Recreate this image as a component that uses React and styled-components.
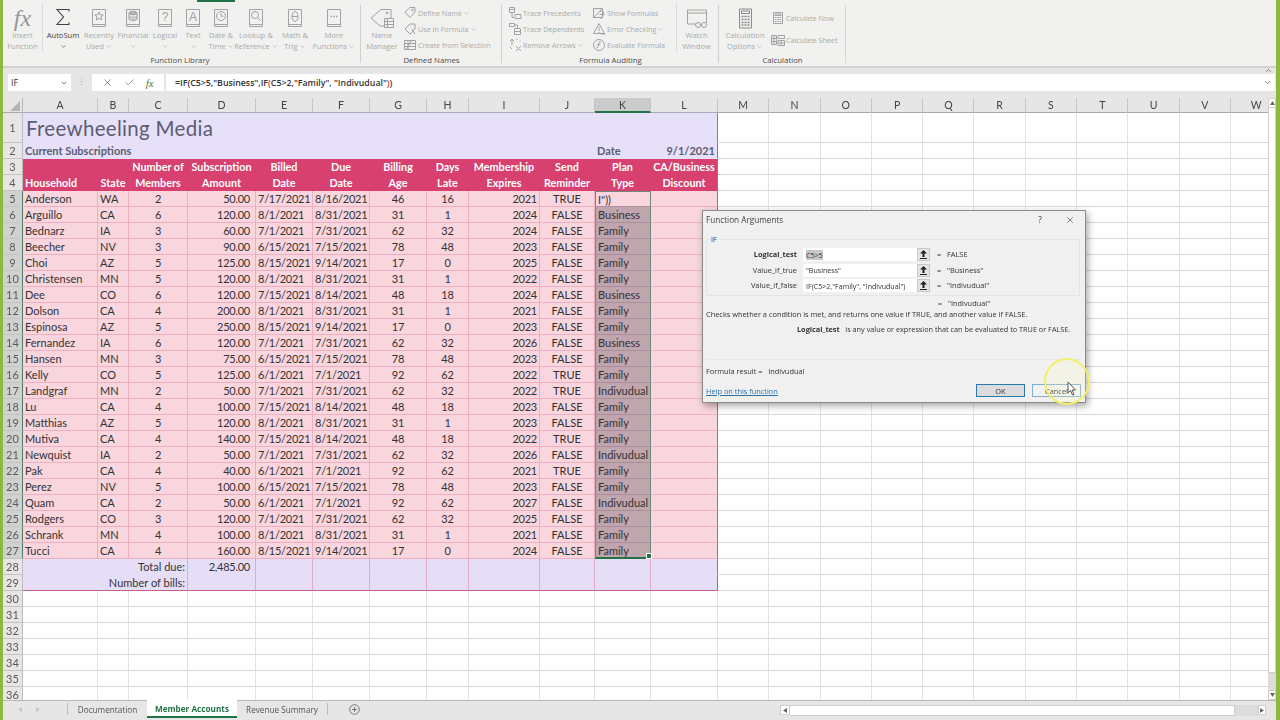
import React from "react";
import styled, { createGlobalStyle } from "styled-components";
import { ChevronDown, ChevronUp, X, Check } from "lucide-react";

const GlobalStyle = createGlobalStyle`
  html, body { margin: 0; padding: 0; background: #fff; overflow: hidden; }
  body { font-family: "Lato", "Liberation Sans", sans-serif; }
`;

const GRID_COLS =
  "20px 75px 31px 59px 68px 57px 57px 57px 42px 71px 55px 56px 67px repeat(11, 51.3px)";

const Window = styled.div`
  position: relative;
  width: 1280px;
  height: 720px;
  display: flex;
  flex-direction: column;
  box-sizing: border-box;
  border-left: 3px solid #8fb93c;
  border-right: 4px solid #8fb93c;
  overflow: hidden;
  filter: blur(0.3px);
`;

/* ribbon */
const Ribbon = styled.div`
  position: relative;
  height: 66px;
  display: flex;
  background: #f1f1ef;
  border-bottom: 2px solid #d2d2d2;
  font-family: "Open Sans", sans-serif;
`;

const ActiveTabMark = styled.div`
  position: absolute;
  left: 194px;
  top: 0;
  width: 38px;
  height: 2px;
  background: #217346;
`;

const Group = styled.div`
  width: ${(p) => p.$w}px;
  box-sizing: border-box;
  padding-right: ${(p) => p.$trim || 0}px;
  display: flex;
  flex-direction: column;
  position: relative;
  &::after {
    content: "";
    position: absolute;
    right: 0;
    top: 5px;
    bottom: 3px;
    width: 1px;
    background: ${(p) => (p.$last ? "#d6d6d6" : "#cfcfcf")};
  }
`;

const GroupBody = styled.div`
  height: 55px;
  padding-top: 3px;
  box-sizing: border-box;
  display: flex;
`;

const GroupLabel = styled.div`
  text-align: center;
  font-size: 7.8px;
  line-height: 11px;
  color: #4c4c4c;
`;

const BigButton = styled.div`
  width: ${(p) => p.$w}px;
  flex: none;
  box-sizing: border-box;
  display: flex;
  flex-direction: column;
  align-items: center;
  color: ${(p) => (p.$dark ? "#444" : "#aaa")};
  font-size: 7.6px;
  line-height: 11px;
  white-space: nowrap;
  ${(p) => p.$rule === "right" && "border-right: 1px solid #dcdcdc; margin-bottom: 3px;"}
  ${(p) => p.$rule === "left" && "border-left: 1px solid #dcdcdc; margin-bottom: 3px;"}
`;

const BigIcon = styled.div`
  height: 27px;
  box-sizing: border-box;
  padding-top: 5px;
  display: flex;
  align-items: flex-start;
  justify-content: center;
`;

const Line = styled.div`
  height: 11px;
  display: flex;
  align-items: center;
  gap: 1px;
`;

const SmallColumn = styled.div`
  width: ${(p) => p.$w}px;
  flex: none;
  box-sizing: border-box;
  display: flex;
  flex-direction: column;
  padding-top: ${(p) => p.$top || 2}px;
  padding-left: ${(p) => p.$left || 0}px;
  gap: ${(p) => p.$gap || 0}px;
`;

const SmallItem = styled.div`
  height: 16px;
  display: flex;
  align-items: center;
  gap: 1px;
  color: #aaa;
  font-size: 7.2px;
  white-space: nowrap;
  svg:first-child { flex: none; }
`;

const IconSvg = styled.svg`
  fill: none;
  stroke: ${(p) => p.$color || "#a2a2a2"};
  stroke-width: 1;
  display: block;
`;

const FxGlyph = styled.span`
  font-family: "Liberation Serif", serif;
  font-style: italic;
  font-size: 24px;
  line-height: 20px;
  color: #969696;
`;

const Caret = () => <ChevronDown size={7} color="#a8a8a8" strokeWidth={2} />;

const Book = ({ children }) => (
  <IconSvg width="16" height="21" viewBox="0 0 16 21">
    <path d="M1.5 1.5h13v15h-13zM1.5 16.5v2h13v-2" />
    {children}
  </IconSvg>
);

const Glyph = styled.text`
  font-family: "Liberation Sans", sans-serif;
  font-size: 12px;
  fill: #a2a2a2;
  stroke: none;
  text-anchor: middle;
`;

const SIGMA = (
  <IconSvg width="16" height="18" viewBox="0 0 16 18" $color="#444">
    <path d="M14 3.5V1.5H2l6.5 7.5L2 16.5h12v-2" strokeWidth="1.1" />
  </IconSvg>
);

const small = (inner) => (
  <IconSvg width="14" height="14" viewBox="0 0 14 14">
    {inner}
  </IconSvg>
);

const ICONS = {
  star: <Book><path d="M8 4l1.2 2.8 3 .2-2.3 2 .8 3L8 10.400l-2.700 1.600.8-3-2.300-2 3-.2z" /></Book>,
  coins: (
    <Book>
      <ellipse cx="8" cy="5" rx="4" ry="1.800" fill="#b5b5b5" />
      <path d="M4 5v6c0 2.400 8 2.400 8 0V5M4 7.500c0 2.400 8 2.400 8 0M4 9.500c0 2.400 8 2.400 8 0" />
    </Book>
  ),
  question: <Book><Glyph x="8" y="13">?</Glyph></Book>,
  letter: <Book><Glyph x="8" y="13">A</Glyph></Book>,
  clock: <Book><circle cx="8" cy="8" r="4.500" /><path d="M8 5v3.200h2.500" /></Book>,
  lens: <Book><circle cx="7" cy="7" r="3.500" /><path d="M9.500 9.500l3 3" /></Book>,
  theta: <Book><ellipse cx="8" cy="8.500" rx="3" ry="5" /><path d="M5 8.500h6" /></Book>,
  dots: <Book><path d="M4.500 8.500h1.500M7.300 8.500h1.500M10 8.500h1.500" strokeWidth="1.400" /></Book>,
  tag: (
    <IconSvg width="26" height="22" viewBox="0 0 26 22">
      <path d="M2 10L12 1.500h10v9" />
      <path d="M2 10l9 8h4" />
      <circle cx="18" cy="5" r="1" />
      <path d="M15.500 10.500h9v9h-9zM15.500 13.500h9M15.500 16.500h9M18.500 10.500v9" />
    </IconSvg>
  ),
  define: small(<><path d="M2 6l5-4.500h5v4.500l-5 5.500z" /><circle cx="9.500" cy="4" r=".8" /></>),
  use: small(<><path d="M2 7l5-5h5v5l-5 5z" /><path d="M9 7l3 5" /></>),
  create: small(<path d="M1.500 2.500h11v9h-11zM1.500 5.500h11M1.500 8.500h11M5 2.500v9M8.500 2.500l-5 9" />),
  precedents: small(<path d="M1.500 1.500h5v5h-5zM1.500 3.500h5M4 6.500v5h2M7 8.500h6v4h-6z" />),
  dependents: small(<path d="M1.500 1.500h5v3h-5zM6.500 3h3v3M6.500 6.500h6v6h-6zM6.500 9.500h6" />),
  arrows: small(<path d="M4 1v6M2 3l2-2 2 2M2 9l2 2M9 1v1M11.500 3h1M8 8l5 5M13 8l-5 5" />),
  show: small(<path d="M1.500 2.500h9v9h-9zM2 11.500l8-9M8 6c3-3 4 0 3 3s-1 4-3 3M7.500 8.500h5" />),
  error: small(<path d="M7 1.500l5.500 10h-11zM7 5v4M7 10v1M9 12h4" />),
  evaluate: small(<><circle cx="7" cy="7" r="5.500" /><path d="M9 4c-2-1-2 1-2.500 3S6 10 4.500 9.500M5 6.500h3.500" /></>),
  glasses: (
    <IconSvg width="22" height="22" viewBox="0 0 22 22">
      <path d="M1.500 2h19v13M1.500 2v14h8M1.500 5h19" />
      <circle cx="12" cy="17" r="2.500" />
      <circle cx="18" cy="17" r="2.500" />
      <path d="M14.500 17h1M9.500 16l1-1" />
    </IconSvg>
  ),
  calc: (
    <IconSvg width="15" height="21" viewBox="0 0 15 21" $color="#8a8a8a">
      <path d="M1.500 1h12v19h-12zM3.500 3h8v2.500h-8z" />
      <path d="M3.500 8.500h2M6.500 8.500h2M9.500 8.500h2M3.500 11.500h2M6.500 11.500h2M9.500 11.500h2M3.500 14.500h2M6.500 14.500h2M9.500 14.500h2M3.500 17h2M6.500 17h2M9.500 17h2" strokeWidth="1.500" />
    </IconSvg>
  ),
  calcSmall: small(<path d="M2.500 1.500h9v11h-9zM4 3h6v1.500H4zM4 6.500h1.500M6.300 6.500h1.500M8.500 6.500h1.500M4 8.500h1.500M6.300 8.500h1.500M8.500 8.500h1.500M4 10.500h1.500M6.300 10.500h1.500M8.500 10.500h1.500" />),
  calcSheet: small(<path d="M.5 2.500h5v9h-5zM.5 5.500h5M.5 8.500h5M3 2.500v9M7 2.500h6.500v3H7zM7 7.500h6.500v5H7zM10.200 7.500v5M7 10h6.500" />),
};

const BIG_FUNCTIONS = [
  { w: 40, icon: SIGMA, lines: ["AutoSum", ""], dark: true },
  { w: 32, icon: ICONS.star, lines: ["Recently", "Used"] },
  { w: 36, icon: ICONS.coins, lines: ["Financial", ""] },
  { w: 28, icon: ICONS.question, lines: ["Logical", ""] },
  { w: 28, icon: ICONS.letter, lines: ["Text", ""] },
  { w: 28, icon: ICONS.clock, lines: ["Date &", "Time"] },
  { w: 42, icon: ICONS.lens, lines: ["Lookup &", "Reference"] },
  { w: 36, icon: ICONS.theta, lines: ["Math &", "Trig"] },
  { w: 42, icon: ICONS.dots, lines: ["More", "Functions"] },
];

const BigBtn = ({ w, icon, lines, dark, rule, noCaret }) => (
  <BigButton $w={w} $dark={dark} $rule={rule}>
    <BigIcon>{icon}</BigIcon>
    <Line>{lines[0]}</Line>
    <Line>
      {lines[1]}
      {!noCaret && <ChevronDown size={7} color={dark ? "#444" : "#a8a8a8"} strokeWidth={2} />}
    </Line>
  </BigButton>
);

const Small = ({ icon, caret, children }) => (
  <SmallItem>
    {ICONS[icon]}
    {children}
    {caret && <Caret />}
  </SmallItem>
);

const CollapseMark = styled.div`
  position: absolute;
  right: 3px;
  top: 58px;
`;

const RibbonBar = () => (
  <Ribbon>
    <ActiveTabMark />
    <Group $w={358} $trim={4}>
      <GroupBody>
        <BigBtn
          w={40}
          icon={<FxGlyph>fx</FxGlyph>}
          lines={["Insert", "Function"]}
          rule="right"
          noCaret
        />
        {BIG_FUNCTIONS.map((b) => (
          <BigBtn key={b.lines[0]} {...b} />
        ))}
      </GroupBody>
      <GroupLabel>Function Library</GroupLabel>
    </Group>
    <Group $w={141}>
      <GroupBody>
        <BigBtn w={42} icon={ICONS.tag} lines={["Name", "Manager"]} noCaret />
        <SmallColumn $w={98}>
          <Small icon="define" caret>Define Name</Small>
          <Small icon="use" caret>Use in Formula</Small>
          <Small icon="create">Create from Selection</Small>
        </SmallColumn>
      </GroupBody>
      <GroupLabel>Defined Names</GroupLabel>
    </Group>
    <Group $w={217}>
      <GroupBody>
        <SmallColumn $w={90} $left={6}>
          <Small icon="precedents">Trace Precedents</Small>
          <Small icon="dependents">Trace Dependents</Small>
          <Small icon="arrows" caret>Remove Arrows</Small>
        </SmallColumn>
        <SmallColumn $w={84}>
          <Small icon="show">Show Formulas</Small>
          <Small icon="error" caret>Error Checking</Small>
          <Small icon="evaluate">Evaluate Formula</Small>
        </SmallColumn>
        <BigBtn w={40} icon={ICONS.glasses} lines={["Watch", "Window"]} rule="left" noCaret />
      </GroupBody>
      <GroupLabel>Formula Auditing</GroupLabel>
    </Group>
    <Group $w={127} $last>
      <GroupBody>
        <BigBtn w={52} icon={ICONS.calc} lines={["Calculation", "Options"]} />
        <SmallColumn $w={74} $top={7} $gap={6}>
          <Small icon="calcSmall">Calculate Now</Small>
          <Small icon="calcSheet">Calculate Sheet</Small>
        </SmallColumn>
      </GroupBody>
      <GroupLabel>Calculation</GroupLabel>
    </Group>
    <CollapseMark>
      <ChevronUp size={9} color="#666" />
    </CollapseMark>
  </Ribbon>
);

/* formula bar */
const FormulaStrip = styled.div`
  height: 30px;
  box-sizing: border-box;
  padding: 6px 1px 7px 5px;
  background: #e6e6e6;
  display: flex;
  align-items: stretch;
  font-family: "Open Sans", sans-serif;
`;

const NameBox = styled.div`
  width: 63px;
  background: #fff;
  display: flex;
  align-items: center;
  justify-content: space-between;
  padding: 0 3px;
  box-sizing: border-box;
  font-size: 9px;
  color: #333;
`;

const Grip = styled.div`
  width: 21px;
  text-align: center;
  color: #aaa;
  font-size: 9px;
  line-height: 15px;
`;

const FxButtons = styled.div`
  width: 72px;
  background: #fff;
  display: flex;
  align-items: center;
  justify-content: space-around;
  padding: 0 5px;
  box-sizing: border-box;
  margin-right: 2px;
`;

const FxSmall = styled.span`
  font-family: "Liberation Serif", serif;
  font-style: italic;
  font-size: 11px;
  color: #4e7a4e;
`;

const FormulaInput = styled.div`
  flex: 1;
  background: #fff;
  padding-left: 9px;
  display: flex;
  align-items: center;
  justify-content: space-between;
  padding-right: 3px;
  font-size: 8.8px;
  font-weight: 600;
  color: #333;
  white-space: pre;
`;

const Paren = styled.span`
  color: #d0352f;
`;

const FormulaBar = () => (
  <FormulaStrip>
    <NameBox>
      IF
      <ChevronDown size={8} color="#666" strokeWidth={2.500} />
    </NameBox>
    <Grip>⋮</Grip>
    <FxButtons>
      <X size={11} color="#666" strokeWidth={1.500} />
      <Check size={11} color="#666" strokeWidth={1.500} />
      <FxSmall>fx</FxSmall>
    </FxButtons>
    <FormulaInput>
      <span>
        =IF(C5&gt;5,"Business",IF<Paren>(</Paren>C5&gt;2,"Family", "Indivudual"<Paren>)</Paren>)
      </span>
      <ChevronDown size={9} color="#555" />
    </FormulaInput>
  </FormulaStrip>
);

/* sheet */
const SheetArea = styled.div`
  flex: 1;
  min-height: 0;
  display: flex;
  overflow: hidden;
`;

const Grid = styled.div`
  width: 1265px;
  flex: none;
  overflow: hidden;
  font-family: "Lato", sans-serif;
`;

const Row = styled.div`
  height: ${(p) => p.$h || 16}px;
  display: grid;
  grid-template-columns: ${GRID_COLS};
`;

const ColHead = styled.div`
  display: flex;
  align-items: center;
  justify-content: center;
  background: ${(p) => (p.$on ? "#c9cccb" : "#e6e6e6")};
  border-right: 1px solid #c6c6c6;
  border-bottom: ${(p) => (p.$on ? "2px solid #217346" : "1px solid #a9a9b5")};
  box-sizing: border-box;
  font-size: 10.5px;
  color: #444;
`;

const Corner = styled.div`
  background: #e6e6e6;
  border-right: 1px solid #b6b6b6;
  border-bottom: 1px solid #a9a9b5;
  box-sizing: border-box;
  display: flex;
  align-items: flex-end;
  justify-content: flex-end;
  padding: 0 2px 1px 0;
  svg { fill: #b4b4b4; display: block; }
`;

const RowHead = styled.div`
  display: flex;
  align-items: center;
  justify-content: center;
  background: ${(p) => (p.$on ? "#d0d2d1" : "#e6e6e6")};
  border-right: ${(p) => (p.$on ? "1.500px solid #517a62" : "1px solid #bdbdbd")};
  border-bottom: 1px solid #c4c4c4;
  box-sizing: border-box;
  font-size: 11px;
  color: #5a5a5a;
`;

const TONES = {
  blank: { bg: "#fff", right: "#e2e2e2", bottom: "#d6d6d6" },
  title: { bg: "#e6e0f8", right: "transparent", bottom: "transparent" },
  titleEnd: { bg: "#e6e0f8", right: "#c25c8c", bottom: "transparent" },
  head: { bg: "#d7406f", right: "transparent", bottom: "transparent" },
  headEnd: { bg: "#d7406f", right: "#c25c8c", bottom: "transparent" },
  pink: { bg: "#f9d5dd", right: "#efafc0", bottom: "#efafc0" },
  pinkEnd: { bg: "#f9d5dd", right: "#c25c8c", bottom: "#efafc0" },
  sel: { bg: "#bea5ae", right: "#6e8a78", bottom: "#ad8f9c" },
  active: { bg: "#f9d5dd", right: "#6e8a78", bottom: "#ad8f9c" },
  total: { bg: "#e6def6", right: "#e0a9d0", bottom: "transparent" },
  totalEnd: { bg: "#e6def6", right: "#c25c8c", bottom: "transparent" },
  totalLast: { bg: "#e6def6", right: "#e0a9d0", bottom: "#c5608a" },
  totalLastEnd: { bg: "#e6def6", right: "#c25c8c", bottom: "#c5608a" },
};

const Cell = styled.div`
  position: relative;
  grid-column: span ${(p) => p.$span || 1};
  display: flex;
  align-items: center;
  justify-content: ${(p) => p.$align || "flex-start"};
  min-width: 0;
  box-sizing: border-box;
  padding: 0 ${(p) => p.$inset || 2}px 0 2px;
  white-space: nowrap;
  background: ${(p) => TONES[p.$tone].bg};
  border-right: 1px solid ${(p) => TONES[p.$tone].right};
  border-bottom: 1px solid ${(p) => TONES[p.$tone].bottom};
  font-size: ${(p) => (p.$bold ? 10.8 : 11)}px;
  font-weight: ${(p) => (p.$bold ? 700 : 400)};
  letter-spacing: ${(p) => (p.$num ? -0.25 : 0)}px;
  color: ${(p) => p.$color || "#333"};
  ${(p) =>
    (p.$tone === "sel" || p.$tone === "active") &&
    "border-left: 1px solid #6e8a78; padding-left: 2px;"}
  ${(p) => p.$tone === "active" && "border-top: 1px solid #6e8a78;"}
  ${(p) => p.$end && "border-bottom: 2px solid #217346;"}
`;

const FillHandle = styled.span`
  position: absolute;
  right: -2px;
  bottom: -2px;
  width: 4px;
  height: 4px;
  background: #217346;
  border: 0.500px solid #fff;
  z-index: 2;
`;

const Title = styled.span`
  font-size: 20.5px;
  color: #5c5c74;
  letter-spacing: 0.3px;
  padding-left: 1px;
`;

const SubTitle = styled.span`
  font-weight: 700;
  font-size: 11px;
  color: #5c5c74;
`;

const COLUMN_LETTERS = "ABCDEFGHIJKLMNOPQRSTUVW".split("");
const ALIGNS = ["flex-start", "flex-start", "center", "flex-end", "flex-start", "flex-start", "center", "center", "flex-end", "center", "flex-start"];
const NUMERIC = [false, false, true, true, true, true, true, true, true, false, false];

const HEAD_TOP = ["", "", "Number of", "Subscription", "Billed", "Due", "Billing", "Days", "Membership", "Send", "Plan", "CA/Business"];
const HEAD_BOTTOM = ["Household", "State", "Members", "Amount", "Date", "Date", "Age", "Late", "Expires", "Reminder", "Type", "Discount"];

const MEMBERS = `Anderson|WA|2|50.00|7/17/2021|8/16/2021|46|16|2021|TRUE|I"))
Arguillo|CA|6|120.00|8/1/2021|8/31/2021|31|1|2024|FALSE|Business
Bednarz|IA|3|60.00|7/1/2021|7/31/2021|62|32|2024|FALSE|Family
Beecher|NV|3|90.00|6/15/2021|7/15/2021|78|48|2023|FALSE|Family
Choi|AZ|5|125.00|8/15/2021|9/14/2021|17|0|2025|FALSE|Family
Christensen|MN|5|120.00|8/1/2021|8/31/2021|31|1|2022|FALSE|Family
Dee|CO|6|120.00|7/15/2021|8/14/2021|48|18|2024|FALSE|Business
Dolson|CA|4|200.00|8/1/2021|8/31/2021|31|1|2021|FALSE|Family
Espinosa|AZ|5|250.00|8/15/2021|9/14/2021|17|0|2023|FALSE|Family
Fernandez|IA|6|120.00|7/1/2021|7/31/2021|62|32|2026|FALSE|Business
Hansen|MN|3|75.00|6/15/2021|7/15/2021|78|48|2023|FALSE|Family
Kelly|CO|5|125.00|6/1/2021|7/1/2021|92|62|2022|TRUE|Family
Landgraf|MN|2|50.00|7/1/2021|7/31/2021|62|32|2022|TRUE|Indivudual
Lu|CA|4|100.00|7/15/2021|8/14/2021|48|18|2023|FALSE|Family
Matthias|AZ|5|120.00|8/1/2021|8/31/2021|31|1|2023|FALSE|Family
Mutiva|CA|4|140.00|7/15/2021|8/14/2021|48|18|2022|TRUE|Family
Newquist|IA|2|50.00|7/1/2021|7/31/2021|62|32|2026|FALSE|Indivudual
Pak|CA|4|40.00|6/1/2021|7/1/2021|92|62|2021|TRUE|Family
Perez|NV|5|100.00|6/15/2021|7/15/2021|78|48|2023|FALSE|Family
Quam|CA|2|50.00|6/1/2021|7/1/2021|92|62|2027|FALSE|Indivudual
Rodgers|CO|3|120.00|7/1/2021|7/31/2021|62|32|2025|FALSE|Family
Schrank|MN|4|100.00|8/1/2021|8/31/2021|31|1|2021|FALSE|Family
Tucci|CA|4|160.00|8/15/2021|9/14/2021|17|0|2024|FALSE|Family`
  .split("\n")
  .map((line) => line.split("|"));

const Blanks = ({ n = 11 }) =>
  Array.from({ length: n }, (_, i) => <Cell key={`b${i}`} $tone="blank" />);

const Sheet = () => (
  <Grid>
    <Row $h={15}>
      <Corner>
        <svg width="10" height="10" viewBox="0 0 10 10"><path d="M10 0v10H0z" /></svg>
      </Corner>
      {COLUMN_LETTERS.map((c) => (
        <ColHead key={c} $on={c === "K"}>{c}</ColHead>
      ))}
    </Row>
    <Row $h={30}>
      <RowHead>1</RowHead>
      <Cell $span={12} $tone="titleEnd"><Title>Freewheeling Media</Title></Cell>
      <Blanks />
    </Row>
    <Row>
      <RowHead>2</RowHead>
      <Cell $span={10} $tone="title"><SubTitle>Current Subscriptions</SubTitle></Cell>
      <Cell $tone="title"><SubTitle>Date</SubTitle></Cell>
      <Cell $tone="titleEnd" $align="flex-end"><SubTitle>9/1/2021</SubTitle></Cell>
      <Blanks />
    </Row>
    {[HEAD_TOP, HEAD_BOTTOM].map((labels, r) => (
      <Row key={r}>
        <RowHead>{r + 3}</RowHead>
        {labels.map((t, i) => (
          <Cell
            key={i}
            $tone={i === 11 ? "headEnd" : "head"}
            $bold
            $color="#fff"
            $align={i === 0 ? "flex-start" : "center"}
          >
            {t}
          </Cell>
        ))}
        <Blanks />
      </Row>
    ))}
    {MEMBERS.map((m, r) => (
      <Row key={m[0]}>
        <RowHead $on>{r + 5}</RowHead>
        {m.map((t, i) => (
          <Cell
            key={i}
            $tone={i === 10 ? (r === 0 ? "active" : "sel") : "pink"}
            $align={ALIGNS[i]}
            $num={NUMERIC[i]}
            $inset={i === 3 ? 5 : 2}
            $end={i === 10 && r === MEMBERS.length - 1}
          >
            {t}
            {i === 10 && r === MEMBERS.length - 1 && <FillHandle />}
          </Cell>
        ))}
        <Cell $tone="pinkEnd" />
        <Blanks />
      </Row>
    ))}
    {[["Total due:", "2,485.00"], ["Number of bills:", ""]].map(([label, value], r) => (
      <Row key={label}>
        <RowHead>{r + 28}</RowHead>
        <Cell $span={3} $tone={r ? "totalLast" : "total"} $align="flex-end">{label}</Cell>
        <Cell $tone={r ? "totalLast" : "total"} $align="flex-end" $num $inset={5}>{value}</Cell>
        {Array.from({ length: 7 }, (_, i) => (
          <Cell key={i} $tone={r ? "totalLast" : "total"} />
        ))}
        <Cell $tone={r ? "totalLastEnd" : "totalEnd"} />
        <Blanks />
      </Row>
    ))}
    {[30, 31, 32, 33, 34, 35, 36].map((n) => (
      <Row key={n}>
        <RowHead>{n}</RowHead>
        <Blanks n={23} />
      </Row>
    ))}
  </Grid>
);

/* scrollbars */
const VScroll = styled.div`
  width: 8px;
  flex: none;
  display: flex;
  flex-direction: column;
  background: #e3e3e3;
`;

const ScrollArrow = styled.div`
  flex: none;
  width: ${(p) => p.$w || 8}px;
  height: ${(p) => p.$h || 10}px;
  background: #fff;
  border: 1px solid #cfcfcf;
  box-sizing: border-box;
  display: flex;
  align-items: center;
  justify-content: center;
  svg { fill: #666; display: block; }
`;

const VThumb = styled.div`
  height: 565px;
  background: #fff;
  border: 1px solid #cfcfcf;
  box-sizing: border-box;
  border-top: none;
`;

const VTrack = styled.div`
  flex: 1;
  background: #dcdcdc;
`;

const Arrow = ({ dir }) => {
  const d = { up: "M0 4L2.500 0L5 4z", down: "M0 0h5L2.500 4z", left: "M4 0v5L0 2.500z", right: "M0 0v5L4 2.500z" };
  return (
    <svg width="5" height="5" viewBox="0 0 5 5"><path d={d[dir]} /></svg>
  );
};

/* tabs */
const TabBar = styled.div`
  height: 20px;
  box-sizing: border-box;
  padding-bottom: 2px;
  display: flex;
  align-items: stretch;
  background: #e6e6e6;
  border-top: 1px solid #b8b8b8;
  font-family: "Open Sans", sans-serif;
  font-size: 8.2px;
  color: #555;
`;

const TabNav = styled.div`
  width: 64px;
  flex: none;
  display: flex;
  align-items: center;
  gap: 13px;
  padding-left: 15px;
  box-sizing: border-box;
  svg { fill: #c6c6c6; }
`;

const TabSep = styled.div`
  width: 1px;
  margin: 2px 0 3px;
  background: #bcbcbc;
`;

const Tab = styled.div`
  width: ${(p) => p.$w}px;
  display: flex;
  align-items: center;
  justify-content: center;
  box-sizing: border-box;
  white-space: nowrap;
  ${(p) =>
    p.$on &&
    "background: #fff; color: #217346; font-weight: 700; border-bottom: 2px solid #217346; margin-top: -1px;"}
`;

const AddSheet = styled.div`
  width: 53px;
  display: flex;
  align-items: center;
  justify-content: center;
`;

const HScroll = styled.div`
  margin-left: auto;
  margin-right: 10px;
  margin-top: 4px;
  margin-bottom: 2px;
  width: 486px;
  display: flex;
`;

const HThumb = styled.div`
  width: 445px;
  background: #fff;
  border: 1px solid #cfcfcf;
  border-left: none;
  box-sizing: border-box;
`;

const HTrack = styled.div`
  flex: 1;
  background: #dcdcdc;
`;

const Tabs = () => (
  <TabBar>
    <TabNav>
      <Arrow dir="left" />
      <Arrow dir="right" />
    </TabNav>
    <TabSep />
    <Tab $w={79}>Documentation</Tab>
    <Tab $on $w={90}>Member Accounts</Tab>
    <Tab $w={90}>Revenue Summary</Tab>
    <TabSep />
    <AddSheet>
      <svg width="11" height="11" viewBox="0 0 11 11" fill="none" stroke="#777">
        <circle cx="5.500" cy="5.500" r="4.800" />
        <path d="M3 5.500h5M5.500 3v5" />
      </svg>
    </AddSheet>
    <HScroll>
      <ScrollArrow $w={10} $h={10}><Arrow dir="left" /></ScrollArrow>
      <HThumb />
      <HTrack />
      <ScrollArrow $w={8} $h={10}><Arrow dir="right" /></ScrollArrow>
    </HScroll>
  </TabBar>
);

/* dialog */
const Dialog = styled.div`
  position: absolute;
  left: 699px;
  top: 210px;
  width: 384px;
  height: 193px;
  box-sizing: border-box;
  background: #f0f0f0;
  border: 1px solid #8a8a8a;
  box-shadow: 2px 3px 7px rgba(0, 0, 0, 0.35);
  display: flex;
  flex-direction: column;
  padding: 0 4px 0 3px;
  font-family: "Open Sans", sans-serif;
  font-size: 7.4px;
  color: #333;
  z-index: 3;
`;

const DialogTitle = styled.div`
  height: 17px;
  display: flex;
  align-items: center;
  justify-content: space-between;
  font-size: 8.2px;
  padding-right: 6px;
  color: #444;
`;

const TitleTools = styled.div`
  display: flex;
  align-items: center;
  gap: 23px;
  font-size: 9px;
`;

const ArgGroup = styled.div`
  position: relative;
  margin-top: 11px;
  height: 57px;
  box-sizing: border-box;
  border: 1px solid #e4e4e4;
  padding-top: 8px;
  margin-right: 1px;
  display: flex;
  flex-direction: column;
  gap: 2.500px;
`;

const GroupTag = styled.span`
  position: absolute;
  left: 3px;
  top: -5px;
  background: #f0f0f0;
  font-size: 7px;
  line-height: 9px;
  padding: 0 1px;
`;

const ArgRow = styled.div`
  height: 13px;
  display: grid;
  grid-template-columns: 96px 114px 13px 1fr;
  align-items: stretch;
`;

const ArgLabel = styled.div`
  text-align: right;
  padding-right: 6px;
  line-height: 13px;
  font-weight: ${(p) => (p.$bold ? 700 : 400)};
`;

const ArgInput = styled.div`
  background: #fff;
  display: flex;
  align-items: center;
  padding-left: 3px;
  font-size: 7.1px;
  white-space: nowrap;
  overflow: hidden;
`;

const Mark = styled.span`
  background: #c8c8c8;
`;

const RefButton = styled.div`
  background: #e4e4e4;
  border: 1px solid #c8c8c8;
  box-sizing: border-box;
  display: flex;
  align-items: center;
  justify-content: center;
`;

const ArgValue = styled.div`
  padding-left: 7px;
  line-height: 13px;
  white-space: pre;
`;

const ResultEcho = styled.div`
  margin-top: 2px;
  margin-left: 232px;
  line-height: 11px;
  white-space: pre;
`;

const Description = styled.div`
  line-height: 11px;
`;

const ArgHelp = styled.div`
  margin-top: 4px;
  line-height: 11px;
  padding-left: 91px;
  font-size: 7.3px;
  white-space: pre;
`;

const Strong = styled.b`
  font-weight: 700;
`;

const ResultRow = styled.div`
  margin-top: 24px;
  padding-top: 6px;
  border-top: 1px solid #e6e6e6;
  line-height: 11px;
  white-space: pre;
`;

const DialogFoot = styled.div`
  margin-top: 7px;
  display: flex;
  align-items: center;
`;

const HelpLink = styled.span`
  color: #2f6fa8;
  text-decoration: underline;
  margin-right: auto;
`;

const DialogButton = styled.div`
  width: 49px;
  height: 13px;
  margin-left: 7px;
  box-sizing: border-box;
  display: flex;
  align-items: center;
  justify-content: center;
  border: 1px solid ${(p) => (p.$primary ? "#2a78b0" : "#7fb0d0")};
  background: ${(p) => (p.$primary ? "#dcdcdc" : "#f2f2f2")};
`;

const UpArrow = () => (
  <svg width="7" height="9" viewBox="0 0 7 9">
    <path d="M3.500 0L7 3.500H4.500V7h-2V3.500H0zM0 8h7v1H0z" fill="#222" />
  </svg>
);

const ClickHalo = styled.div`
  position: absolute;
  left: 1041px;
  top: 358px;
  width: 46px;
  height: 47px;
  box-sizing: border-box;
  border-radius: 50%;
  border: 2.500px solid #f2f06a;
  background: rgba(255, 255, 190, 0.18);
  z-index: 4;
`;

const Pointer = styled.svg`
  position: absolute;
  left: 1064px;
  top: 381px;
  z-index: 5;
`;

const ARGS = [
  ["Logical_test", "C5>5", "=   FALSE", true],
  ["Value_if_true", '"Business"', '=   "Business"'],
  ["Value_if_false", 'IF(C5>2,"Family", "Indivudual")', '=   "Indivudual"'],
];

const FunctionArguments = () => (
  <Dialog>
    <DialogTitle>
      Function Arguments
      <TitleTools>
        <span>?</span>
        <X size={10} color="#444" strokeWidth={1.500} />
      </TitleTools>
    </DialogTitle>
    <ArgGroup>
      <GroupTag>IF</GroupTag>
      {ARGS.map(([label, value, result, first]) => (
        <ArgRow key={label}>
          <ArgLabel $bold={first}>{label}</ArgLabel>
          <ArgInput>{first ? <Mark>{value}</Mark> : value}</ArgInput>
          <RefButton><UpArrow /></RefButton>
          <ArgValue>{result}</ArgValue>
        </ArgRow>
      ))}
    </ArgGroup>
    <ResultEcho>{'=   "Indivudual"'}</ResultEcho>
    <Description>
      Checks whether a condition is met, and returns one value if TRUE, and another value if FALSE.
    </Description>
    <ArgHelp>
      <Strong>Logical_test</Strong>{"   is any value or expression that can be evaluated to TRUE or FALSE."}
    </ArgHelp>
    <ResultRow>{"Formula result =   Indivudual"}</ResultRow>
    <DialogFoot>
      <HelpLink>Help on this function</HelpLink>
      <DialogButton $primary>OK</DialogButton>
      <DialogButton>Cancel</DialogButton>
    </DialogFoot>
  </Dialog>
);

export default function App() {
  return (
    <>
      <GlobalStyle />
      <Window>
        <RibbonBar />
        <FormulaBar />
        <SheetArea>
          <Sheet />
          <VScroll>
            <ScrollArrow><Arrow dir="up" /></ScrollArrow>
            <VThumb />
            <VTrack />
            <ScrollArrow><Arrow dir="down" /></ScrollArrow>
          </VScroll>
        </SheetArea>
        <Tabs />
        <FunctionArguments />
        <ClickHalo />
        <Pointer width="10" height="15" viewBox="0 0 10 15">
          <path d="M1 1v11l2.500-2.500L5.500 14l1.500-.7-2-4.300h3.500z" fill="#fff" stroke="#555" />
        </Pointer>
      </Window>
    </>
  );
}
